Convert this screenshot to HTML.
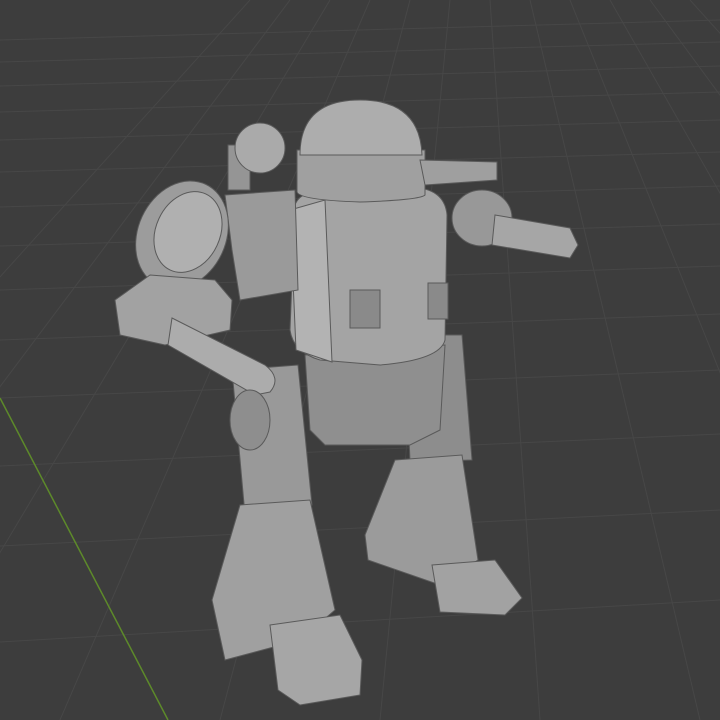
<!DOCTYPE html>
<html><head><meta charset="utf-8"><style>
html,body{margin:0;padding:0;background:#3d3d3d;}
svg{display:block;}
</style></head><body>
<svg width="720" height="720" viewBox="0 0 720 720" xmlns="http://www.w3.org/2000/svg">
<rect width="720" height="720" fill="#3d3d3d"/>
<g stroke="#474747" stroke-width="1" fill="none">
<!-- roughly horizontal grid lines -->
<path d="M0 40 L720 20 M0 62 L720 42 M0 86 L720 66 M0 112 L720 92 M0 140 L720 120 M0 172 L720 152 M0 207 L720 186 M0 246 L720 224 M0 290 L720 266 M0 340 L720 314 M0 398 L720 370 M0 466 L720 434 M0 546 L720 510 M0 642 L720 600"/>
<!-- converging lines -->
<path d="M-400 720 L250 0 M-250 720 L290 0 M-100 720 L330 0 M60 720 L370 0 M220 720 L410 0 M380 720 L450 0 M540 720 L490 0 M700 720 L530 0 M860 720 L570 0 M1020 720 L610 0 M1180 720 L650 0 M1340 720 L690 0 M1500 720 L730 0 M1660 720 L770 0"/>
</g>
<path d="M0 398 L168 720" stroke="#5d8a2a" stroke-width="1.5"/>
<g stroke="#5a5a5a" stroke-width="1">
<!-- right leg -->
<path d="M405 335 L462 335 L472 460 L410 462 Z" fill="#8d8d8d"/>
<path d="M395 460 L462 455 L478 560 L440 585 L368 560 L365 535 Z" fill="#9b9b9b"/>
<path d="M432 565 L495 560 L522 598 L505 615 L440 612 Z" fill="#a2a2a2"/>
<!-- left leg -->
<path d="M232 370 L298 365 L312 505 L245 515 Z" fill="#999"/>
<path d="M240 505 L310 500 L335 610 L300 640 L225 660 L212 600 Z" fill="#a0a0a0"/>
<path d="M270 625 L340 615 L362 660 L360 695 L300 705 L278 690 Z" fill="#a6a6a6"/>
<!-- lower body band -->
<path d="M305 355 L445 345 L440 430 L410 445 L325 445 L310 430 Z" fill="#8f8f8f"/>
<!-- body cylinder -->
<path d="M295 205 Q300 190 330 190 L420 188 Q445 192 447 215 L445 340 Q440 360 380 365 L320 360 Q293 352 290 330 Z" fill="#a4a4a4"/>
<path d="M290 210 L325 200 L332 362 L296 350 Z" fill="#b3b3b3"/>
<rect x="350" y="290" width="30" height="38" fill="#8a8a8a"/>
<rect x="428" y="283" width="20" height="36" fill="#8a8a8a"/>
<!-- shoulder block -->
<path d="M225 195 L295 190 L298 290 L240 300 L232 250 Z" fill="#9a9a9a"/>
<!-- head band & dome -->
<path d="M297 150 L425 150 L425 195 Q420 200 360 202 Q300 200 297 192 Z" fill="#a0a0a0"/>
<path d="M300 155 Q300 100 360 100 Q420 100 422 155 Z" fill="#adadad"/>
<!-- right gun -->
<path d="M420 160 L497 162 L497 180 L425 185 Z" fill="#9f9f9f"/>
<ellipse cx="482" cy="218" rx="30" ry="28" fill="#989898"/>
<path d="M495 215 L570 228 L578 245 L570 258 L492 245 Z" fill="#a6a6a6"/>
<!-- left sphere -->
<rect x="228" y="145" width="22" height="45" fill="#959595"/>
<circle cx="260" cy="148" r="25" fill="#aaa"/>
<!-- left shoulder disk -->
<ellipse cx="182" cy="235" rx="44" ry="56" transform="rotate(25 182 235)" fill="#9c9c9c"/>
<ellipse cx="188" cy="232" rx="32" ry="42" transform="rotate(25 188 232)" fill="#b0b0b0"/>
<!-- left arm -->
<path d="M150 275 L215 280 L232 300 L230 330 L165 345 L120 335 L115 300 Z" fill="#a2a2a2"/>
<path d="M172 318 L265 365 Q282 378 270 392 L255 395 L168 345 Z" fill="#acacac"/>
<!-- left knee joint -->
<ellipse cx="250" cy="420" rx="20" ry="30" fill="#8e8e8e"/>
</g>
</svg>
</body></html>
